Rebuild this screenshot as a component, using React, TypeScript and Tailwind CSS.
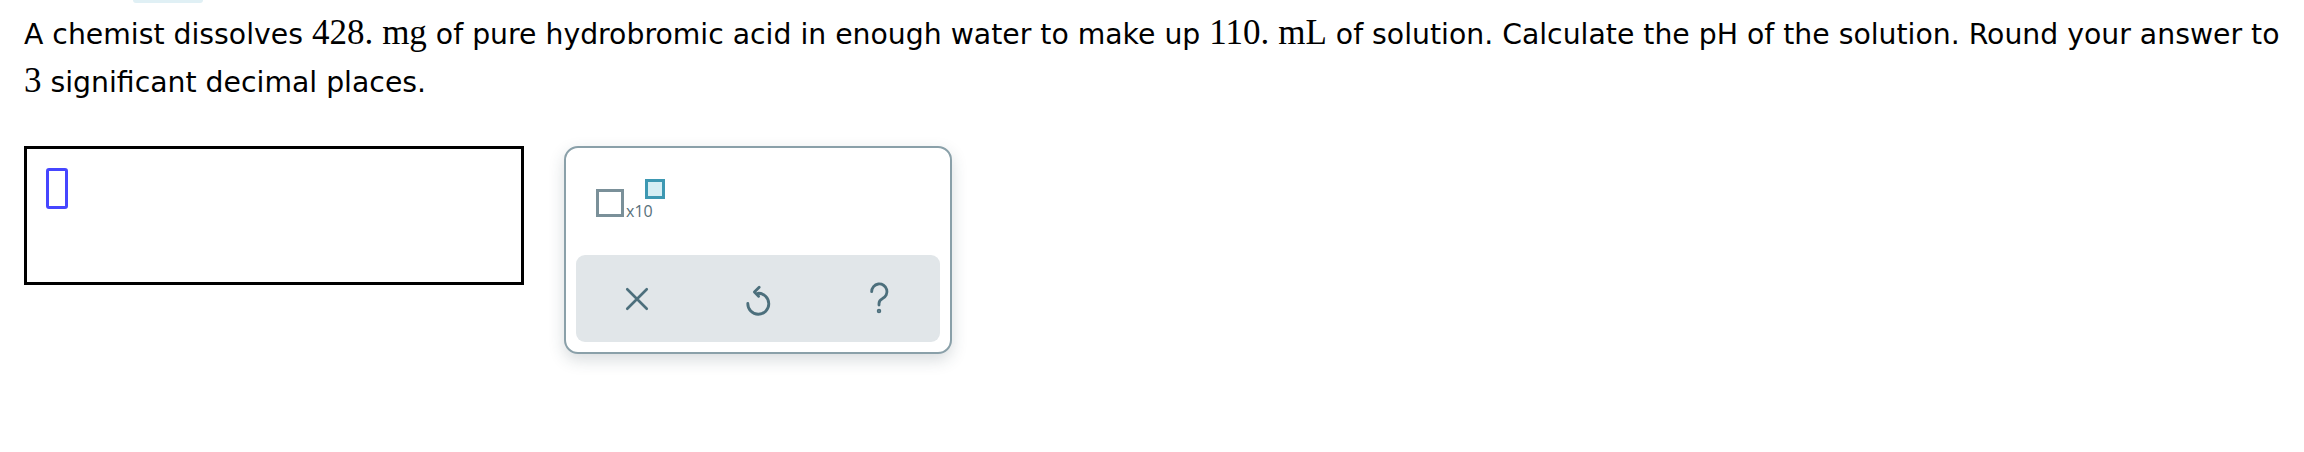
import React from "react";

const sans = { fontFamily: '"DejaVu Sans", Verdana, sans-serif' };

function Num({ children }: { children: React.ReactNode }) {
  return (
    <span className="font-['Liberation_Serif',serif] text-[35px] leading-none">{children}</span>
  );
}

function UndoIcon() {
  return (
    <svg width="36" height="36" viewBox="0 0 24 24" fill="none" stroke="currentColor" strokeWidth="1.9" strokeLinecap="round" strokeLinejoin="round">
      <path d="M12 8.2 A7 7 0 1 1 5.2 15" />
      <path d="M12.8 4.2 L9.6 7.4 L12.4 10.2" />
    </svg>
  );
}

function HelpIcon() {
  return (
    <svg width="40" height="40" viewBox="0 0 24 24" fill="none" stroke="currentColor" strokeWidth="1.7" strokeLinecap="round" strokeLinejoin="round">
      <path d="M7.6 7.6 A4.6 4.6 0 1 1 14 11.8 C12.8 12.4 12 13.4 12 14.8 V15.6" />
      <circle cx="12" cy="19.2" r="0.5" fill="currentColor" />
    </svg>
  );
}

function CloseIcon() {
  return (
    <svg width="26" height="26" viewBox="0 0 24 24" fill="none" stroke="currentColor" strokeWidth="2.4" strokeLinecap="round">
      <path d="M3 3 L21 21 M21 3 L3 21" />
    </svg>
  );
}

export default function App() {
  return (
    <div className="w-[2304px] h-[452px] bg-white overflow-hidden text-black" style={sans}>
      {/* bit of the toolbar above */}
      <div className="h-[3px] w-[70px] ml-[133px] rounded-b-[10px] bg-[#e0f0f5]" />

      {/* Question */}
      <div className="pl-6 pt-[8px]">
        <p className="text-[28.3px] leading-[48px] w-[2262px]">
          A chemist dissolves <Num>428.</Num> <Num>mg</Num> of pure hydrobromic acid in enough water to make up{" "}
          <Num>110.</Num> <Num>mL</Num> of solution. Calculate the pH of the solution. Round your answer to{" "}
          <Num>3</Num> significant decimal places.
        </p>
      </div>

      {/* Answer + keypad */}
      <div className="flex items-start gap-10 pl-6 mt-[39px]">
        <div className="w-[500px] h-[139px] border-[3px] border-black pl-[19px] pt-[19px]">
          <div className="w-[22px] h-[41px] border-[3px] border-[#4646ff] rounded-[3px]" />
        </div>

        <div className="w-[388px] border-2 border-[#8aa0a9] rounded-[14px] bg-white shadow-[0_6px_16px_rgba(40,60,70,0.18)] p-[10px]">
          <div className="h-[97px] pl-[20px] pt-[21px]">
            <div className="flex items-start">
              <div className="w-[28px] h-[28px] border-[3px] border-[#7a9099] mt-[10px]" />
              <span className="text-[16px] leading-none text-[#56707b] mt-[24px] ml-[2px] font-['Open_Sans',sans-serif]">x10</span>
              <div className="w-[20px] h-[20px] border-[3px] border-[#3d98b2] bg-[#d5eef4] -ml-[8px]" />
            </div>
          </div>
          <div className="h-[87px] rounded-[9px] bg-[#e1e6e9] grid grid-cols-3 items-center text-[#4c6f7c]">
            <div className="flex justify-center"><CloseIcon /></div>
            <div className="flex justify-center"><UndoIcon /></div>
            <div className="flex justify-center"><HelpIcon /></div>
          </div>
        </div>
      </div>
    </div>
  );
}
